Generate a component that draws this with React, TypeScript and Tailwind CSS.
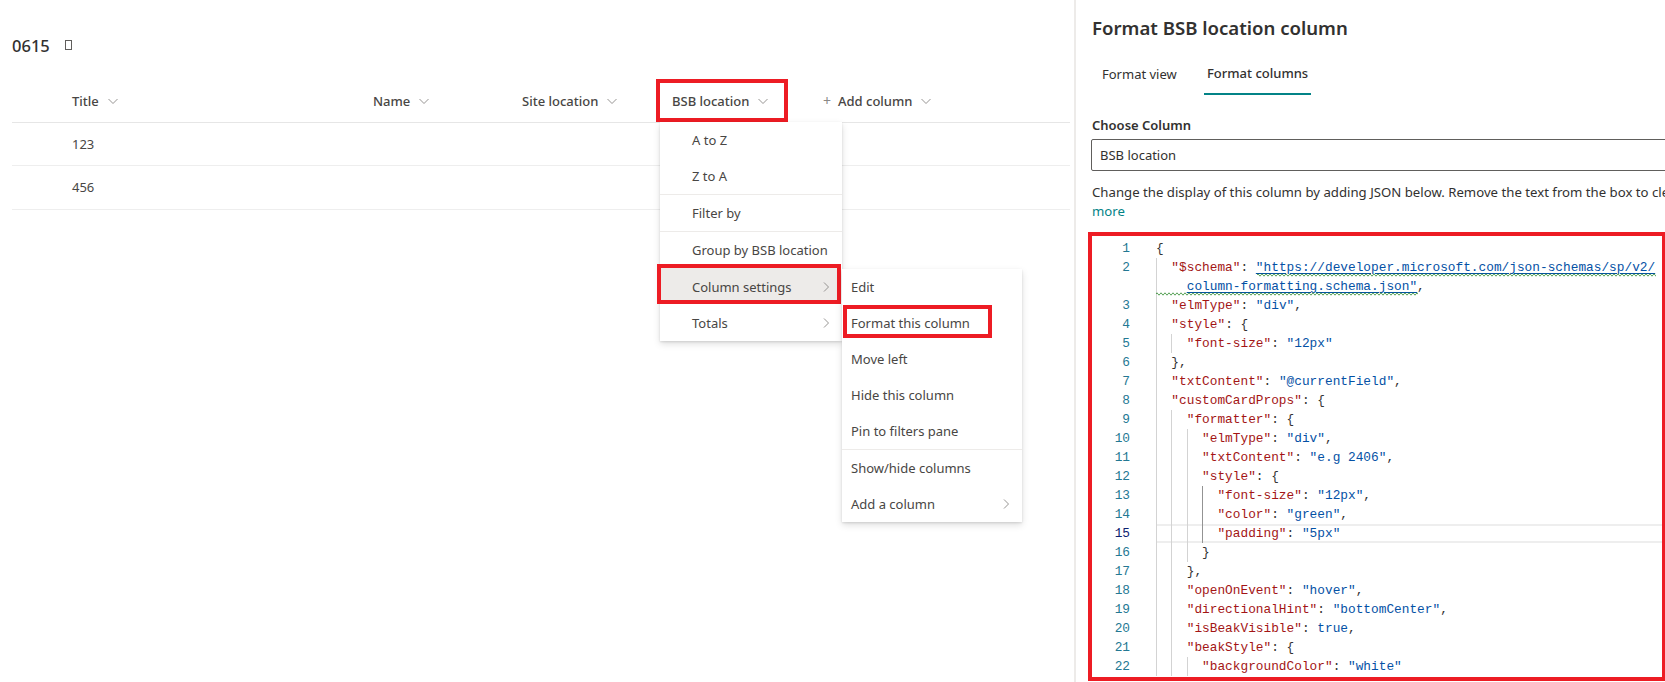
import React from "react"

const uiFont = "font-['Noto_Sans','Open_Sans',sans-serif]"

function Chevron({ dir = "down", className = "" }: { dir?: "down" | "right"; className?: string }) {
  return (
    <svg width="10" height="10" viewBox="0 0 10 10" fill="none" className={className}>
      {dir === "down" ? (
        <path d="M0.5 3 L5 7.5 L9.5 3" stroke="#8a8886" strokeWidth="0.9" />
      ) : (
        <path d="M3 0.5 L7.5 5 L3 9.5" stroke="#8a8886" strokeWidth="0.9" />
      )}
    </svg>
  )
}

function HeaderLabel({ text }: { text: string }) {
  return (
    <span className="flex items-center gap-[9px] whitespace-nowrap text-[13px] font-medium text-[#484644]">
      <span className="pt-[2px]">{text}</span>
      <Chevron />
    </span>
  )
}

function MenuItem({ text, arrow, left = "pl-[32px]", arrowRight = "pr-[11px]" }: { text: string; arrow?: boolean; left?: string; arrowRight?: string }) {
  return (
    <div className={`relative flex h-[36px] items-center justify-between whitespace-nowrap text-[13px] text-[#484644] ${left} ${arrowRight}`}>
      <span className="pt-[2px]">{text}</span>
      {arrow && <Chevron dir="right" />}
    </div>
  )
}

type Tok = [string, "k" | "s" | "p"]
type Line = { n?: number; indent: number; toks: Tok[]; url?: boolean; active?: boolean }

const P = (s: string): Tok => [s, "p"]
const K = (s: string): Tok => [s, "k"]
const S = (s: string): Tok => [s, "s"]

const lines: Line[] = [
  { n: 1, indent: 0, toks: [P("{")] },
  { n: 2, indent: 2, toks: [K('"$schema"'), P(": ")], url: true },
  { indent: 4, toks: [], url: true },
  { n: 3, indent: 2, toks: [K('"elmType"'), P(": "), S('"div"'), P(",")] },
  { n: 4, indent: 2, toks: [K('"style"'), P(": {")] },
  { n: 5, indent: 4, toks: [K('"font-size"'), P(": "), S('"12px"')] },
  { n: 6, indent: 2, toks: [P("},")] },
  { n: 7, indent: 2, toks: [K('"txtContent"'), P(": "), S('"@currentField"'), P(",")] },
  { n: 8, indent: 2, toks: [K('"customCardProps"'), P(": {")] },
  { n: 9, indent: 4, toks: [K('"formatter"'), P(": {")] },
  { n: 10, indent: 6, toks: [K('"elmType"'), P(": "), S('"div"'), P(",")] },
  { n: 11, indent: 6, toks: [K('"txtContent"'), P(": "), S('"e.g 2406"'), P(",")] },
  { n: 12, indent: 6, toks: [K('"style"'), P(": {")] },
  { n: 13, indent: 8, toks: [K('"font-size"'), P(": "), S('"12px"'), P(",")] },
  { n: 14, indent: 8, toks: [K('"color"'), P(": "), S('"green"'), P(",")] },
  { n: 15, indent: 8, toks: [K('"padding"'), P(": "), S('"5px"')], active: true },
  { n: 16, indent: 6, toks: [P("}")] },
  { n: 17, indent: 4, toks: [P("},")] },
  { n: 18, indent: 4, toks: [K('"openOnEvent"'), P(": "), S('"hover"'), P(",")] },
  { n: 19, indent: 4, toks: [K('"directionalHint"'), P(": "), S('"bottomCenter"'), P(",")] },
  { n: 20, indent: 4, toks: [K('"isBeakVisible"'), P(": "), S("true"), P(",")] },
  { n: 21, indent: 4, toks: [K('"beakStyle"'), P(": {")] },
  { n: 22, indent: 6, toks: [K('"backgroundColor"'), P(": "), S('"white"')] },
]

// green squiggle the editor puts under the bad schema url
function Squiggle({ width, className }: { width: number; className: string }) {
  let d = "M0 2"
  for (let x = 0; x < width; x += 4) d += ` q1 -2.4 2 0 q1 2.4 2 0`
  return (
    <svg width={width} height="4" className={`absolute ${className}`}>
      <path d={d} stroke="#2e8b2e" strokeWidth="0.8" fill="none" />
    </svg>
  )
}

function CodeLine({ line }: { line: Line }) {
  // the wrapped half of line 2 only shows the outer guide
  const guides = line.n ? Math.floor(line.indent / 2) : 1
  return (
    <div className="flex h-[19px] leading-[19px]">
      <div className={`w-[38px] shrink-0 text-right ${line.active ? "text-[#0b216f]" : "text-[#237893]"}`}>{line.n}</div>
      <div className={`relative ml-[26px] flex-1 whitespace-pre ${line.active ? "shadow-[inset_0_2px_0_#eeeeee,inset_0_-2px_0_#eeeeee]" : ""}`}>
        {Array.from({ length: guides }).map((_, i) => (
          <span
            key={i}
            className={`absolute top-0 h-[19px] w-px ${line.indent === 8 && i === 3 ? "bg-[#939393]" : "bg-[#d3d3d3]"}`}
            style={{ left: i * 15.36 }}
          />
        ))}
        <span>{" ".repeat(line.indent)}</span>
        {line.toks.map(([s, t], i) => (
          <span key={i} className={t === "k" ? "text-[#a31515]" : t === "s" ? "text-[#0451a5]" : "text-[#333333]"}>
            {s}
          </span>
        ))}
        {line.url && line.n === 2 && (
          <>
            <span className="text-[#0451a5] underline decoration-[#0451a5] underline-offset-2">"https://developer.microsoft.com/json-schemas/sp/v2/</span>
            <Squiggle width={399} className="left-[101px] top-[15px]" />
          </>
        )}
        {line.url && !line.n && (
          <>
            <span className="text-[#0451a5] underline decoration-[#0451a5] underline-offset-2">column-formatting.schema.json"</span>
            <span className="text-[#333333]">,</span>
            <Squiggle width={262} className="left-0 top-[15px]" />
          </>
        )}
      </div>
    </div>
  )
}

export default function App() {
  return (
    <div className={`flex h-[682px] w-[1665px] overflow-hidden bg-white text-[#323130] ${uiFont}`}>
      {/* list side */}
      <div className="relative w-[1074px] shrink-0 pl-[12px] pr-[4px]">
        <div className="mt-[33px] flex h-[24px] items-center">
          <span className="pt-[1px] text-[16.5px] font-medium leading-[24px] text-[#323130]">0615</span>
          <span className="ml-[15px] h-[10px] w-[7px] border border-[#605e5c]" />
        </div>

        <div className="mt-[22px] flex h-[44px] items-center border-b border-[#e6e6e6]">
          <div className="w-[60px]" />
          <div className="w-[301px]"><HeaderLabel text="Title" /></div>
          <div className="w-[149px]"><HeaderLabel text="Name" /></div>
          <div className="w-[134px]"><HeaderLabel text="Site location" /></div>
          <div className="flex h-[43px] w-[132px] items-center border-[4.5px] border-[#ed1c24] pl-[12px]">
            <HeaderLabel text="BSB location" />
          </div>
          <div className="ml-[35px] flex items-center gap-[7px]">
            <span className="text-[14px] leading-none text-[#8a8886]">+</span>
            <HeaderLabel text="Add column" />
          </div>
        </div>
        <div className="flex h-[43px] items-center border-b border-[#eeeeee] pl-[60px] pt-[2px] text-[13px] text-[#484644]">123</div>
        <div className="flex h-[44px] items-center border-b border-[#eeeeee] pl-[60px] text-[13px] text-[#484644]">456</div>

        {/* column menu */}
        <div className="absolute left-[660px] top-[122px] w-[182px] bg-white shadow-[0_3px_7px_rgba(0,0,0,0.13),0_1px_2px_rgba(0,0,0,0.11)]">
          <MenuItem text="A to Z" />
          <MenuItem text="Z to A" />
          <div className="h-px bg-[#edebe9]" />
          <MenuItem text="Filter by" />
          <div className="h-px bg-[#edebe9]" />
          <MenuItem text="Group by BSB location" />
          <div className="relative h-px" />
          <div className="relative">
            <div className="absolute -left-[3px] -top-[5px] h-[40px] w-[184px] border-[4.5px] border-[#ed1c24] bg-[#edebe9]" />
            <MenuItem text="Column settings" arrow />
          </div>
          <MenuItem text="Totals" arrow />
        </div>

        {/* column settings submenu */}
        <div className="absolute left-[842px] top-[269px] w-[180px] bg-white shadow-[0_3px_7px_rgba(0,0,0,0.13),0_1px_2px_rgba(0,0,0,0.11)]">
          <MenuItem text="Edit" left="pl-[9px]" />
          <div className="relative">
            <div className="absolute left-[1px] top-0 h-[33px] w-[149px] border-[4.5px] border-[#ed1c24]" />
            <MenuItem text="Format this column" left="pl-[9px]" />
          </div>
          <MenuItem text="Move left" left="pl-[9px]" />
          <MenuItem text="Hide this column" left="pl-[9px]" />
          <MenuItem text="Pin to filters pane" left="pl-[9px]" />
          <div className="h-px bg-[#edebe9]" />
          <MenuItem text="Show/hide columns" left="pl-[9px]" />
          <MenuItem text="Add a column" left="pl-[9px]" arrow />
        </div>
      </div>

      {/* format pane */}
      <div className="min-w-0 flex-1 overflow-hidden border-l-2 border-[#edebe9] pl-[16px] pt-[14px]">
        <div className="whitespace-nowrap text-[18.6px] font-semibold leading-[28px] text-[#323130]">Format BSB location column</div>
        <div className="mt-[10px] flex h-[43px] items-center whitespace-nowrap text-[13px] text-[#323130]">
          <div className="ml-[10px] w-[102px] pt-[2px]">Format view</div>
          <div className="flex h-full w-[107px] items-center border-b-[2px] border-[#038387] pl-[3px] pt-[2px] font-medium">Format columns</div>
        </div>
        <div className="mt-[20px] text-[13px] font-semibold leading-[20px]">Choose Column</div>
        <div className="-ml-[1px] mt-[4px] flex h-[32px] w-[640px] items-center rounded-[2px] border border-[#605e5c] pl-[8px] pt-[2px] text-[13px]">BSB location</div>
        <div className="mt-[12px] w-[640px] whitespace-nowrap text-[13.2px] leading-[19px]">
          Change the display of this column by adding JSON below. Remove the text from the box to clear custom
        </div>
        <div className="text-[13.2px] leading-[19px] text-[#038387]">more</div>
        <div className="-ml-[4px] mt-[11px] h-[449px] overflow-hidden border-[4.5px] border-b-[4px] border-r-[3px] border-[#ed1c24] pt-[3px] font-['Liberation_Mono',monospace] text-[12.8px]">
          {lines.map((l, i) => (
            <CodeLine key={i} line={l} />
          ))}
        </div>
      </div>
    </div>
  )
}
